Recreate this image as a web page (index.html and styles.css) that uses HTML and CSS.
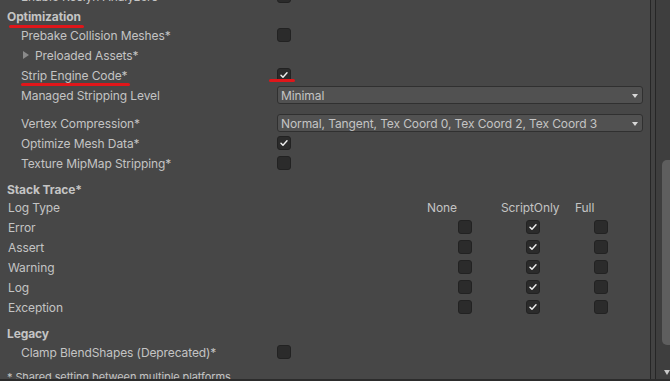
FILE: index.html
```html
<!DOCTYPE html>
<html>
<head>
<meta charset="utf-8">
<link rel="stylesheet" href="styles.css">
</head>
<body>
<div class="window">
  <div class="content">
    <div class="inner">
      <div class="row first"><span class="label">Enable Roslyn Analyzers</span><span class="cb checked"><svg viewBox="0 0 14 14"><path d="M3.5 7.2 L5.8 9.5 L10.5 4.5"/></svg></span></div>

      <div class="heading h-opt"><span class="mark">Optimization</span></div>
      <div class="row"><span class="label">Prebake Collision Meshes*</span><span class="cb"></span></div>
      <div class="row"><span class="label fold"><span class="tri"></span>Preloaded Assets*</span></div>
      <div class="row"><span class="label"><span class="mark">Strip Engine Code*</span></span><span class="cb checked marked"><svg viewBox="0 0 14 14"><path d="M3.5 7.2 L5.8 9.5 L10.5 4.5"/></svg></span></div>
      <div class="row r-managed"><span class="label">Managed Stripping Level</span><span class="dd">Minimal<span class="arrow"></span></span></div>
      <div class="row r-vertex"><span class="label">Vertex Compression*</span><span class="dd">Normal, Tangent, Tex Coord 0, Tex Coord 2, Tex Coord 3<span class="arrow"></span></span></div>
      <div class="row"><span class="label">Optimize Mesh Data*</span><span class="cb checked"><svg viewBox="0 0 14 14"><path d="M3.5 7.2 L5.8 9.5 L10.5 4.5"/></svg></span></div>
      <div class="row"><span class="label">Texture MipMap Stripping*</span><span class="cb"></span></div>

      <div class="heading h-stack">Stack Trace*</div>
      <div class="grid">
        <div class="trow head"><span class="tlabel">Log Type</span><span class="col c1">None</span><span class="col c2">ScriptOnly</span><span class="col c3">Full</span></div>
        <div class="trow"><span class="tlabel">Error</span><span class="col"><span class="cb"></span></span><span class="col"><span class="cb checked"><svg viewBox="0 0 14 14"><path d="M3.5 7.2 L5.8 9.5 L10.5 4.5"/></svg></span></span><span class="col"><span class="cb"></span></span></div>
        <div class="trow"><span class="tlabel">Assert</span><span class="col"><span class="cb"></span></span><span class="col"><span class="cb checked"><svg viewBox="0 0 14 14"><path d="M3.5 7.2 L5.8 9.5 L10.5 4.5"/></svg></span></span><span class="col"><span class="cb"></span></span></div>
        <div class="trow"><span class="tlabel">Warning</span><span class="col"><span class="cb"></span></span><span class="col"><span class="cb checked"><svg viewBox="0 0 14 14"><path d="M3.5 7.2 L5.8 9.5 L10.5 4.5"/></svg></span></span><span class="col"><span class="cb"></span></span></div>
        <div class="trow"><span class="tlabel">Log</span><span class="col"><span class="cb"></span></span><span class="col"><span class="cb checked"><svg viewBox="0 0 14 14"><path d="M3.5 7.2 L5.8 9.5 L10.5 4.5"/></svg></span></span><span class="col"><span class="cb"></span></span></div>
        <div class="trow"><span class="tlabel">Exception</span><span class="col"><span class="cb"></span></span><span class="col"><span class="cb checked"><svg viewBox="0 0 14 14"><path d="M3.5 7.2 L5.8 9.5 L10.5 4.5"/></svg></span></span><span class="col"><span class="cb"></span></span></div>
      </div>

      <div class="heading h-legacy">Legacy</div>
      <div class="row"><span class="label">Clamp BlendShapes (Deprecated)*</span><span class="cb"></span></div>
      <div class="footer">* Shared setting between multiple platforms.</div>
    </div>
  </div>
  <div class="divider"></div>
  <div class="scrollbar">
    <div class="thumb"></div>
    <div class="sarrow"></div>
  </div>
</div>
</body>
</html>
```

FILE: styles.css
```css
html, body {
  margin: 0;
  padding: 0;
  background: #474747;
  overflow: hidden;
}
body {
  font-family: Inter, "Noto Sans", sans-serif;
  font-size: 12px;
  letter-spacing: -0.1px;
  color: #c4c4c4;
}
.window {
  display: flex;
  width: 670px;
  height: 381px;
  overflow: hidden;
  border-bottom: 2px solid #2c2c2c;
  box-sizing: border-box;
}
.content {
  width: 650px;
  flex: none;
  overflow: hidden;
  border-right: 1px solid #262626;
}
.inner {
  margin-top: -14px;
}
.row {
  height: 20px;
  display: flex;
  align-items: center;
  position: relative;
}
.label {
  width: 256px;
  padding-left: 21px;
  flex: none;
  white-space: nowrap;
}
.fold {
  display: flex;
  align-items: center;
  padding-left: 23px;
  width: 254px;
}
.tri {
  width: 0;
  height: 0;
  border-top: 4px solid transparent;
  border-bottom: 4px solid transparent;
  border-left: 6px solid #8a8a8a;
  margin-right: 6px;
}
.heading {
  font-weight: 700;
  padding-left: 7px;
  display: flex;
  align-items: center;
}
.h-opt { height: 18px; margin-top: 1px; }
.h-stack { height: 18px; margin-top: 7px; }
.h-legacy { height: 18px; margin-top: 7px; }

.mark { position: relative; }
.mark::after {
  content: "";
  position: absolute;
  left: 2px;
  right: -3px;
  bottom: -4px;
  height: 3px;
  border-radius: 2px;
  background: #e0161a;
}
.row .label .mark::after {
  left: 0;
  right: -2px;
  bottom: -3px;
}

.cb {
  width: 14px;
  height: 14px;
  box-sizing: border-box;
  background: #2b2b2b;
  border: 1px solid #222;
  border-radius: 3px;
  display: inline-flex;
  flex: none;
  position: relative;
}
.cb svg {
  width: 12px;
  height: 12px;
}
.cb svg path {
  fill: none;
  stroke: #eeeeee;
  stroke-width: 1.7;
  stroke-linecap: round;
  stroke-linejoin: round;
}
.marked::after {
  content: "";
  position: absolute;
  left: -9px;
  width: 26px;
  top: 10px;
  height: 3px;
  border-radius: 2px;
  background: #e0161a;
}

.dd {
  flex: 1;
  margin-right: 7px;
  height: 18px;
  box-sizing: border-box;
  background: #515151;
  border: 1px solid #303030;
  border-radius: 3px;
  display: flex;
  align-items: center;
  padding-left: 3px;
  position: relative;
  white-space: nowrap;
}
.arrow {
  position: absolute;
  right: 4px;
  top: 7px;
  width: 0;
  height: 0;
  border-left: 3.5px solid transparent;
  border-right: 3.5px solid transparent;
  border-top: 4px solid #d8d8d8;
}
.r-managed { margin-top: 0; }
.r-vertex { margin-top: 8px; }

.grid { display: flex; flex-direction: column; }
.trow {
  display: grid;
  grid-template-columns: 424px 68px 68px 68px;
  height: 20px;
  align-items: center;
}
.trow.head { height: 19px; }
.tlabel { padding-left: 8px; }
.col { padding-left: 34px; display: flex; }
.head .col.c1 { padding-left: 3px; }
.head .col.c2 { padding-left: 9px; }
.head .col.c3 { padding-left: 15px; }

.footer {
  margin-top: 5px;
  height: 20px;
  padding-left: 7px;
  display: flex;
  align-items: center;
  font-size: 11px;
}

.divider {
  width: 4px;
  flex: none;
  background: #424242;
  border-right: 1px solid #262626;
}
.scrollbar {
  flex: 1;
  background: #3e3e3e;
  position: relative;
}
.thumb {
  position: absolute;
  left: 6px;
  right: -4px;
  top: 160px;
  height: 185px;
  background: #5e5e5e;
  border-radius: 5px;
}
.sarrow {
  position: absolute;
  left: 8px;
  top: 370px;
  width: 0;
  height: 0;
  border-left: 3.5px solid transparent;
  border-right: 3.5px solid transparent;
  border-top: 5px solid #c8c8c8;
}
```
